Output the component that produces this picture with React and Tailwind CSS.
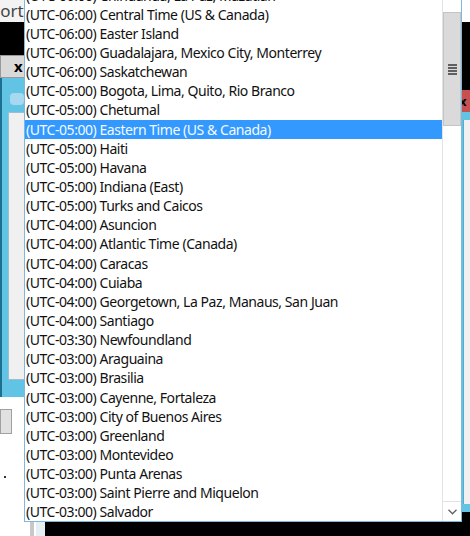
const zones = [
  '(UTC-06:00) Chihuahua, La Paz, Mazatlan',
  '(UTC-06:00) Central Time (US & Canada)',
  '(UTC-06:00) Easter Island',
  '(UTC-06:00) Guadalajara, Mexico City, Monterrey',
  '(UTC-06:00) Saskatchewan',
  '(UTC-05:00) Bogota, Lima, Quito, Rio Branco',
  '(UTC-05:00) Chetumal',
  '(UTC-05:00) Eastern Time (US & Canada)',
  '(UTC-05:00) Haiti',
  '(UTC-05:00) Havana',
  '(UTC-05:00) Indiana (East)',
  '(UTC-05:00) Turks and Caicos',
  '(UTC-04:00) Asuncion',
  '(UTC-04:00) Atlantic Time (Canada)',
  '(UTC-04:00) Caracas',
  '(UTC-04:00) Cuiaba',
  '(UTC-04:00) Georgetown, La Paz, Manaus, San Juan',
  '(UTC-04:00) Santiago',
  '(UTC-03:30) Newfoundland',
  '(UTC-03:00) Araguaina',
  '(UTC-03:00) Brasilia',
  '(UTC-03:00) Cayenne, Fortaleza',
  '(UTC-03:00) City of Buenos Aires',
  '(UTC-03:00) Greenland',
  '(UTC-03:00) Montevideo',
  '(UTC-03:00) Punta Arenas',
  '(UTC-03:00) Saint Pierre and Miquelon',
  '(UTC-03:00) Salvador',
  '(UTC-03:00) Santarem',
];

const selected = '(UTC-05:00) Eastern Time (US & Canada)';

// the settings window behind the list, mostly hidden by it
function Backdrop() {
  return (
    <div className="flex h-full w-full">
      {/* left edge of the window */}
      <div className="flex w-[30px] flex-col bg-white">
        <div className="h-[22px] overflow-hidden bg-[#f3f3f3] pt-[1px]">
          <span className="ml-[-10px] block whitespace-nowrap text-[17px] leading-[20px] text-[#444]">Portal</span>
        </div>
        <div className="h-[33px] bg-black" />
        <div className="flex h-[23px] items-center border border-[#9a9a9a] bg-[#d9d9d9] pl-[13px]">
          <span className="text-[15px] font-bold leading-none text-black">x</span>
        </div>
        <div className="flex h-[319px] flex-col gap-[7px] border-l-2 border-[#1c6f8e] bg-[#62c4e4] pl-[6px] pt-[15px]">
          <div className="ml-[2px] h-[12px] w-[14px] rounded-sm bg-[#a6d9ef]" />
          <div className="h-[268px] border border-[#9bbfcf] bg-[#f0f0f0]" />
        </div>
        <div className="h-[12px]" />
        <div className="h-[25px] w-[12px] border border-[#a0a0a0] bg-[#e1e1e1]" />
        <div className="ml-[4px] mt-[42px] h-[2px] w-[2px] bg-[#333]" />
      </div>

      {/* middle, only its bottom strip shows */}
      <div className="flex flex-1 flex-col">
        <div className="flex-1 bg-white" />
        <div className="flex h-[15px]">
          <div className="w-[4px] bg-[#c8c8c8]" />
          <div className="ml-[2px] w-[9px] bg-[#e4f0f4]" />
          <div className="flex-1 bg-black" />
        </div>
      </div>

      {/* right edge of the window */}
      <div className="flex w-[8px] flex-col">
        <div className="h-[22px] bg-white" />
        <div className="h-[68px] bg-black" />
        <div className="flex h-[22px] items-center bg-[#c75050]">
          <span className="ml-[-3px] text-[13px] font-bold leading-none text-black">x</span>
        </div>
        <div className="flex h-[400px] flex-col bg-[#62c4e4] py-[8px] pl-[1px]">
          <div className="flex-1 border-l border-[#5aa9c9] bg-[#f0f0f0]" />
        </div>
        <div className="flex-1 bg-black" />
      </div>
    </div>
  );
}

function Row({ label }) {
  const on = label === selected;
  return (
    <div
      className={
        'flex h-[19.15px] items-center whitespace-nowrap pl-[1px] text-[14px] leading-none tracking-[-0.45px] ' +
        (on ? 'bg-[#3399ff] text-[#f4f9ff]' : 'text-[#111]')
      }
    >
      {label}
    </div>
  );
}

export default function App() {
  return (
    <div
      className="relative h-[536px] w-[470px] overflow-hidden"
      style={{ fontFamily: '"Noto Sans", "Open Sans", Arial, sans-serif' }}
    >
      <Backdrop />

      {/* open combo list, drawn over the window */}
      <div className="absolute left-[24px] top-[-20px] flex h-[542px] w-[438px] border border-[#7fb8de] bg-white">
        <div className="flex-1 overflow-hidden">
          <div className="mt-[5px]">
            {zones.map((z) => (
              <Row key={z} label={z} />
            ))}
          </div>
        </div>

        {/* scrollbar */}
        <div className="flex w-[19px] flex-col border-l border-[#e3e3e3] bg-white">
          <div className="h-[31px]" />
          <div className="flex h-[114px] flex-col items-center justify-center gap-[1px] border border-[#c4c4c4] bg-[#dadada]">
            <div className="h-[2px] w-[9px] bg-[#606060]" />
            <div className="h-[2px] w-[9px] bg-[#606060]" />
            <div className="h-[2px] w-[9px] bg-[#606060]" />
            <div className="h-[2px] w-[9px] bg-[#606060]" />
          </div>
          <div className="flex-1" />
          <div className="flex h-[20px] items-center justify-center border-t border-[#e3e3e3]">
            <svg width="9" height="6" viewBox="0 0 9 6" fill="none">
              <path d="M0.5 0.8 L4.5 4.8 L8.5 0.8" stroke="#606060" strokeWidth="1.3" />
            </svg>
          </div>
        </div>
      </div>
    </div>
  );
}
